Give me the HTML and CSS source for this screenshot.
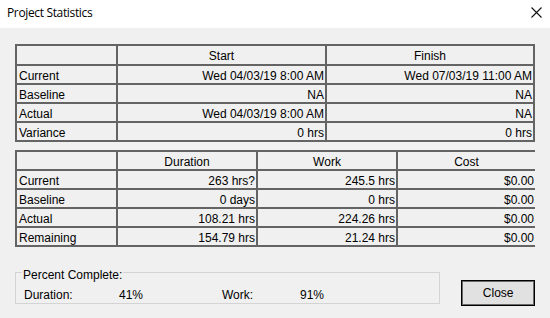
FILE: index.html
```html
<!DOCTYPE html>
<html>
<head>
<meta charset="utf-8">
<link rel="stylesheet" href="styles.css">
</head>
<body>
<div class="window">
  <div class="titlebar">
    <span class="title">Project Statistics</span>
    <svg class="close-x" width="11" height="11" viewBox="0 0 11 11"><path d="M0.5 0.5 L10.5 10.5 M10.5 0.5 L0.5 10.5" stroke="#111" stroke-width="1.1" fill="none"/></svg>
  </div>
  <div class="content">
    <div class="grid g3">
      <div class="cell"></div>
      <div class="cell hd">Start</div>
      <div class="cell hd">Finish</div>

      <div class="cell lb">Current</div>
      <div class="cell num">Wed 04/03/19 8:00 AM</div>
      <div class="cell num">Wed 07/03/19 11:00 AM</div>

      <div class="cell lb">Baseline</div>
      <div class="cell num">NA</div>
      <div class="cell num">NA</div>

      <div class="cell lb">Actual</div>
      <div class="cell num">Wed 04/03/19 8:00 AM</div>
      <div class="cell num">NA</div>

      <div class="cell lb">Variance</div>
      <div class="cell num">0 hrs</div>
      <div class="cell num">0 hrs</div>
    </div>

    <div class="grid g4">
      <div class="cell"></div>
      <div class="cell hd">Duration</div>
      <div class="cell hd">Work</div>
      <div class="cell hd">Cost</div>

      <div class="cell lb">Current</div>
      <div class="cell num">263 hrs?</div>
      <div class="cell num">245.5 hrs</div>
      <div class="cell num">$0.00</div>

      <div class="cell lb">Baseline</div>
      <div class="cell num">0 days</div>
      <div class="cell num">0 hrs</div>
      <div class="cell num">$0.00</div>

      <div class="cell lb">Actual</div>
      <div class="cell num">108.21 hrs</div>
      <div class="cell num">224.26 hrs</div>
      <div class="cell num">$0.00</div>

      <div class="cell lb">Remaining</div>
      <div class="cell num">154.79 hrs</div>
      <div class="cell num">21.24 hrs</div>
      <div class="cell num">$0.00</div>
    </div>

    <div class="bottom">
      <div class="group">
        <span class="legend">Percent Complete:</span>
        <div class="group-row">
          <span class="f-dur">Duration:</span>
          <span class="f-dur-v">41%</span>
          <span class="f-work">Work:</span>
          <span class="f-work-v">91%</span>
        </div>
      </div>
      <button class="btn">Close</button>
    </div>
  </div>
</div>
</body>
</html>
```

FILE: styles.css
```css
html, body {
  margin: 0;
  padding: 0;
}
body {
  width: 550px;
  height: 318px;
  background: #f0f0f0;
  font-family: "Liberation Sans", Arial, sans-serif;
  font-size: 12px;
  color: #000;
  overflow: hidden;
}
.window {
  width: 550px;
  height: 318px;
}
.titlebar {
  height: 28px;
  background: #ffffff;
  display: flex;
  justify-content: space-between;
  align-items: flex-start;
  padding: 0 8px 0 7px;
  box-sizing: border-box;
}
.title {
  font-family: "Open Sans", "Noto Sans", sans-serif;
  font-size: 12px;
  letter-spacing: -0.35px;
  line-height: 16px;
  padding-top: 5px;
  color: #000;
}
.close-x {
  margin-top: 7px;
}
.content {
  padding: 16px 15px 0 15px;
}
.grid {
  display: grid;
  gap: 2px;
  padding: 2px;
  background: #646464;
  width: 520px;
  box-sizing: border-box;
}
.g3 {
  grid-template-columns: 99px 207px 206px;
  grid-template-rows: 18px repeat(4, 17px);
}
.g4 {
  margin-top: 8px;
  grid-template-columns: 99px 138px 138px 137px;
  grid-template-rows: 17px repeat(4, 17px);
}
.cell {
  background: #f0f0f0;
  line-height: 14px;
  padding-top: 3px;
  box-sizing: border-box;
  white-space: nowrap;
  overflow: hidden;
}
.hd {
  text-align: center;
}
.lb {
  padding-left: 2px;
}
.num {
  text-align: right;
  padding-right: 1px;
}
.bottom {
  display: flex;
  align-items: flex-start;
  margin-top: 25px;
}
.group {
  position: relative;
  width: 427px;
  height: 32px;
  box-sizing: border-box;
  border: 1px solid #d4d4d4;
  padding: 15px 0 1px 8px;
}
.legend {
  position: absolute;
  top: -5px;
  left: 6px;
  padding: 0 1px;
  background: #f0f0f0;
  line-height: 14px;
}
.group-row {
  display: flex;
  line-height: 14px;
}
.f-dur { width: 95px; }
.f-dur-v { width: 103px; }
.f-work { width: 78px; }
.btn {
  margin-left: 21px;
  margin-top: 8px;
  width: 74px;
  height: 26px;
  box-sizing: border-box;
  border: 1px solid #000;
  box-shadow: inset 0 0 0 1px #6a6a6a;
  background: #e1e1e1;
  font-family: "Liberation Sans", Arial, sans-serif;
  font-size: 12px;
  color: #000;
  padding: 0;
}
```
